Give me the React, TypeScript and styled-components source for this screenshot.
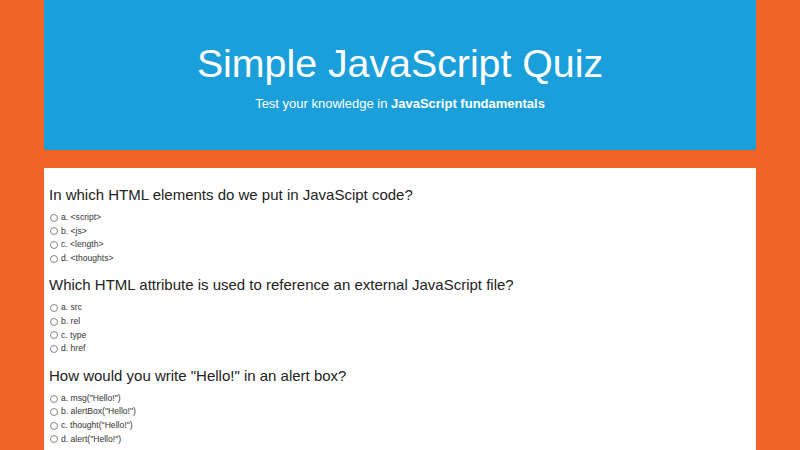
import React from "react";
import styled, { createGlobalStyle } from "styled-components";

const Global = createGlobalStyle`
  html, body { margin: 0; padding: 0; }
  body {
    background: #f26327;
    font-family: "Liberation Sans", Arial, sans-serif;
  }
`;

const Page = styled.div`
  width: 712px;
  margin: 0 auto;
  display: flex;
  flex-direction: column;
  gap: 18px;
`;

const Header = styled.header`
  background: #1a9fdb;
  height: 150px;
  border-radius: 0 0 3px 3px;
  color: #fff;
  display: flex;
  flex-direction: column;
  align-items: center;
  padding-top: 39px;
  box-sizing: border-box;
`;

const Title = styled.h1`
  margin: 0;
  font-size: 39.3px;
  font-weight: 400;
  line-height: 48px;
`;

const Subtitle = styled.p`
  margin: 9px 0 0;
  font-size: 13px;
  line-height: 16px;
`;

const Card = styled.main`
  background: #fff;
  padding: 18px 5px 10px;
  min-height: 300px;
  color: #333;
`;

const Question = styled.section`
  margin-bottom: 11px;
`;

const QTitle = styled.h3`
  margin: 0 0 7px;
  font-size: 15px;
  font-weight: 400;
  line-height: 18px;
  color: #222;
`;

const Option = styled.label`
  display: flex;
  align-items: center;
  gap: 3px;
  font-size: 8.6px;
  line-height: 13.6px;
  color: #333;
`;

const Radio = styled.input`
  appearance: none;
  margin: 0 0 0 1px;
  width: 8px;
  height: 8px;
  border: 1px solid #888;
  border-radius: 50%;
  box-sizing: border-box;
  background: #fff;
`;

const questions = [
  {
    q: "In which HTML elements do we put in JavaScipt code?",
    o: ["<script>", "<js>", "<length>", "<thoughts>"],
  },
  {
    q: "Which HTML attribute is used to reference an external JavaScript file?",
    o: ["src", "rel", "type", "href"],
  },
  {
    q: 'How would you write "Hello!" in an alert box?',
    o: ['msg("Hello!")', 'alertBox("Hello!")', 'thought("Hello!")', 'alert("Hello!")'],
  },
];

const letters = ["a", "b", "c", "d"];

export default function App() {
  return (
    <>
      <Global />
      <Page>
        <Header>
          <Title>Simple JavaScript Quiz</Title>
          <Subtitle>
            Test your knowledge in <b>JavaScript fundamentals</b>
          </Subtitle>
        </Header>
        <Card>
          {questions.map((item, i) => (
            <Question key={i}>
              <QTitle>{item.q}</QTitle>
              {item.o.map((opt, j) => (
                <Option key={j}>
                  <Radio type="radio" name={`q${i}`} />
                  {letters[j]}. {opt}
                </Option>
              ))}
            </Question>
          ))}
        </Card>
      </Page>
    </>
  );
}
